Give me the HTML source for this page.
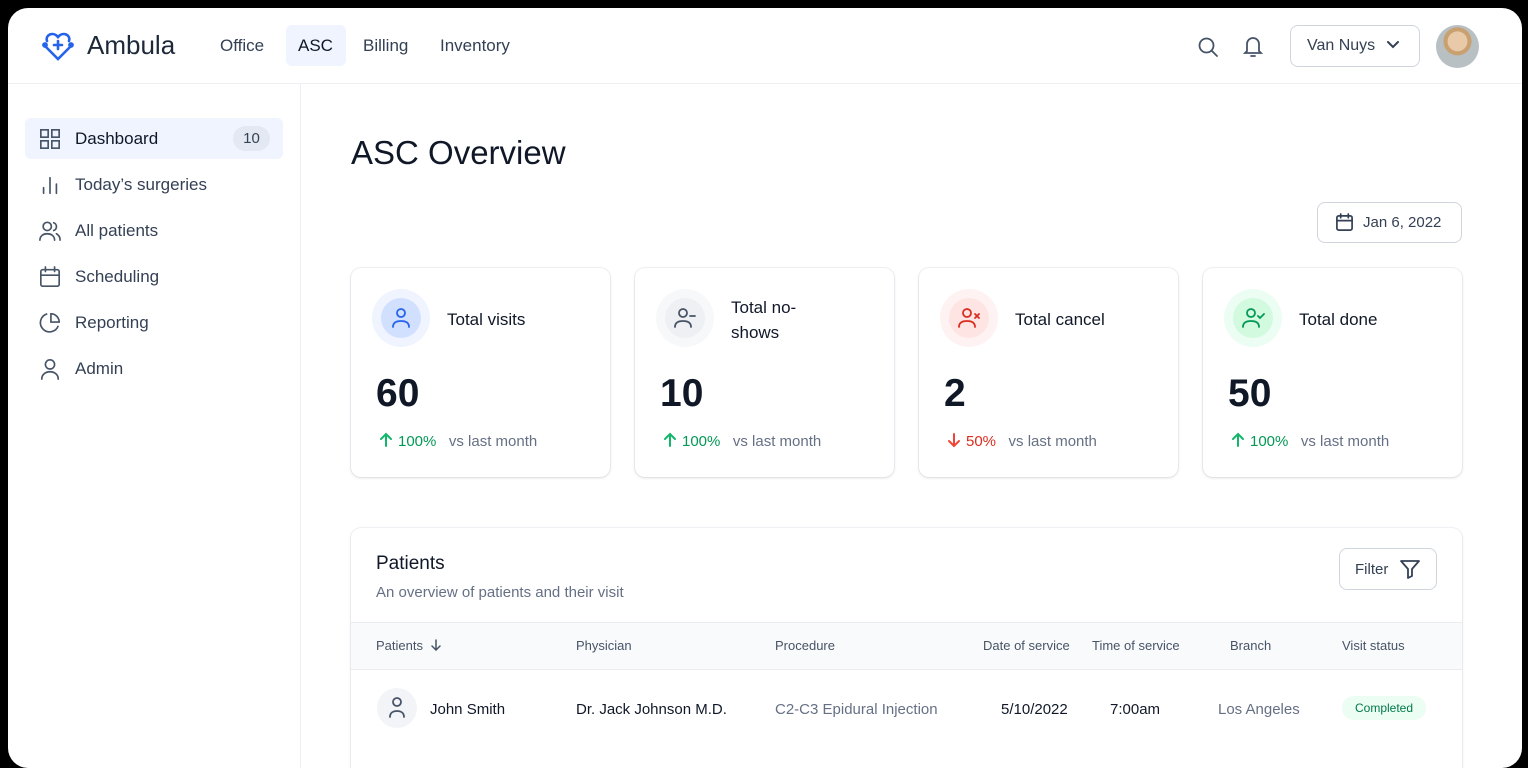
<!DOCTYPE html>
<html><head><meta charset="utf-8"><style>
*{box-sizing:border-box;margin:0;padding:0}
body{width:1528px;height:742px;background:#000;overflow:hidden;font-family:"Liberation Sans",sans-serif;color:#101828;position:relative}
.panel{position:absolute;left:8px;top:8px;width:1514px;height:760px;background:#fff;border-radius:20px;overflow:hidden}
.a{position:absolute;white-space:nowrap}
.hline{position:absolute;left:0;top:75px;width:1514px;height:1px;background:#eef0f3}
.vline{position:absolute;left:292px;top:76px;width:1px;height:700px;background:#eef0f3}
.nav{font-size:17px;color:#344054;top:28px}
.side{font-size:17px;color:#344054;left:67px}
.card{position:absolute;top:260px;width:259px;height:209px;background:#fff;border-radius:10px;box-shadow:0 1px 3px rgba(16,24,40,.12),0 0 0 1px #f2f4f7}
.ic{position:absolute;left:21px;top:21px;width:58px;height:58px;border-radius:50%}
.ic div{position:absolute;left:9px;top:9px;width:40px;height:40px;border-radius:50%}
.ic svg{position:absolute;left:17px;top:17px}
.ct{position:absolute;left:96px;top:39px;font-size:17px;color:#101828;line-height:25px}
.num{position:absolute;left:25px;top:104px;font-size:39px;font-weight:bold;color:#101828}
.ch{position:absolute;left:27px;top:164px;font-size:15px;color:#667085}
.ch svg{vertical-align:-2px;margin-right:4px}
.th{position:absolute;top:630px;font-size:13px;color:#475467}
.td{position:absolute;top:693px;font-size:15px}
</style></head><body>
<div class="panel">
 <svg class="a" style="left:33px;top:22px" width="34" height="32" viewBox="0 0 34 32" fill="none" stroke="#2563eb" stroke-width="2.6" stroke-linecap="round"><path d="M6 11C4 5 12 1 17 7C22 1 30 5 28 11"/><path d="M5 17L17 29L29 17"/><path d="M17 11v8M13 15h8"/><circle cx="4" cy="15" r="1.6" fill="#2563eb"/><circle cx="30" cy="15" r="1.6" fill="#2563eb"/></svg>
 <div class="a" style="left:79px;top:22px;font-size:26px;color:#1d2939">Ambula</div>
 <div class="a" style="left:278px;top:17px;width:60px;height:41px;background:#eff4ff;border-radius:6px"></div>
 <div class="a nav" style="left:212px">Office</div>
 <div class="a nav" style="left:290px;color:#101828">ASC</div>
 <div class="a nav" style="left:355px">Billing</div>
 <div class="a nav" style="left:432px">Inventory</div>
 <svg class="a" style="left:1189px;top:28px" width="22" height="22" viewBox="0 0 22 22" fill="none" stroke="#475467" stroke-width="1.8" stroke-linecap="round"><circle cx="9.5" cy="9.5" r="7"/><path d="M15 15l5 5"/></svg>
 <svg class="a" style="left:1235px;top:27px" width="20" height="24" viewBox="0 0 20 24" fill="none" stroke="#475467" stroke-width="1.8" stroke-linecap="round"><path d="M4 16V9a6 6 0 0112 0v7l2 2H2z"/><path d="M8 21h4"/></svg>
 <div class="a" style="left:1282px;top:17px;width:130px;height:42px;border:1px solid #d0d5dd;border-radius:8px"></div>
 <div class="a" style="left:1299px;top:29px;font-size:16px;color:#344054">Van Nuys</div>
 <svg class="a" style="left:1378px;top:32px" width="14" height="10" viewBox="0 0 14 10" fill="none" stroke="#344054" stroke-width="2" stroke-linecap="round"><path d="M2 2l5 5 5-5"/></svg>
 <div class="a" style="left:1428px;top:17px;width:43px;height:43px;border-radius:50%;background:radial-gradient(circle at 50% 38%,#e8c9a8 0 28%,#c9a070 30% 40%,#b9c0c3 42%)"></div>
 <div class="hline"></div><div class="vline"></div>

 <div class="a" style="left:17px;top:110px;width:258px;height:41px;background:#eff4ff;border-radius:6px"></div>
 <div class="a" style="left:225px;top:118px;width:37px;height:25px;background:#e3e8f2;border-radius:13px;font-size:15px;color:#344054;text-align:center;line-height:25px">10</div>
 <svg class="a" style="left:31px;top:120px" width="22" height="22" viewBox="0 0 24 24" fill="none" stroke="#475467" stroke-width="1.8"><rect x="2" y="2" width="8" height="8"/><rect x="14" y="2" width="8" height="8"/><rect x="2" y="14" width="8" height="8"/><rect x="14" y="14" width="8" height="8"/></svg>
 <svg class="a" style="left:31px;top:166px" width="22" height="22" viewBox="0 0 24 24" fill="none" stroke="#475467" stroke-width="1.8" stroke-linecap="round"><path d="M5 21v-6M12 21V4M19 21v-10"/></svg>
 <svg class="a" style="left:30px;top:212px" width="24" height="22" viewBox="0 0 26 24" fill="none" stroke="#475467" stroke-width="1.8" stroke-linecap="round"><circle cx="10" cy="7" r="4.5"/><path d="M2 22c0-5 4-7 8-7s8 2 8 7M17 3a4.5 4.5 0 010 8.5M20 15c2 1 4 3 4 7"/></svg>
 <svg class="a" style="left:31px;top:258px" width="22" height="22" viewBox="0 0 24 24" fill="none" stroke="#475467" stroke-width="1.8" stroke-linecap="round"><rect x="2" y="4" width="20" height="18" rx="2"/><path d="M2 10h20M7 1v5M17 1v5"/></svg>
 <svg class="a" style="left:31px;top:304px" width="22" height="22" viewBox="0 0 24 24" fill="none" stroke="#475467" stroke-width="1.8"><path d="M21 15A10 10 0 119 2"/><path d="M13 2a9 9 0 019 9h-9z"/></svg>
 <svg class="a" style="left:31px;top:350px" width="22" height="22" viewBox="0 0 24 24" fill="none" stroke="#475467" stroke-width="1.8" stroke-linecap="round"><circle cx="12" cy="7" r="5"/><path d="M3 23c0-5 4-8 9-8s9 3 9 8"/></svg>
 <div class="a side" style="top:121px;color:#101828">Dashboard</div>
 <div class="a side" style="top:167px">Today’s surgeries</div>
 <div class="a side" style="top:213px">All patients</div>
 <div class="a side" style="top:259px">Scheduling</div>
 <div class="a side" style="top:305px">Reporting</div>
 <div class="a side" style="top:351px">Admin</div>

 <div class="a" style="left:343px;top:126px;font-size:33px;color:#101828">ASC Overview</div>
 <div class="a" style="left:1309px;top:194px;width:145px;height:41px;border:1px solid #d0d5dd;border-radius:8px"></div>
 <svg class="a" style="left:1327px;top:205px" width="19" height="19" viewBox="0 0 20 20" fill="none" stroke="#344054" stroke-width="1.8" stroke-linecap="round"><rect x="2" y="3" width="16" height="15" rx="2"/><path d="M2 8h16M6 1v4M14 1v4"/></svg>
 <div class="a" style="left:1355px;top:206px;font-size:15px;color:#344054">Jan 6, 2022</div>

 <div class="card" style="left:343px"><div class="ic" style="background:#eff4ff"><div style="background:#d1e0ff"></div><svg width="24" height="24" viewBox="0 0 24 24" fill="none" stroke="#2563eb" stroke-width="1.8" stroke-linecap="round"><circle cx="12" cy="7" r="4"/><path d="M4 21c0-4 3-6 8-6s8 2 8 6"/></svg></div><div class="ct">Total visits</div><div class="num">60</div><div class="ch"><svg width="16" height="16" viewBox="0 0 16 16" fill="none" stroke="#12b76a" stroke-width="2" stroke-linecap="round"><path d="M8 14V2M3 7l5-5 5 5"/></svg><span style="color:#039855">100%</span>&nbsp;&nbsp; vs last month</div></div>
 <div class="card" style="left:627px"><div class="ic" style="background:#f7f8fa"><div style="background:#eef0f4"></div><svg width="24" height="24" viewBox="0 0 24 24" fill="none" stroke="#475467" stroke-width="1.8" stroke-linecap="round"><circle cx="10" cy="7" r="4"/><path d="M2 21c0-4 3-6 8-6s8 2 8 6M17 10h5"/></svg></div><div class="ct" style="top:27px">Total no-<br>shows</div><div class="num">10</div><div class="ch"><svg width="16" height="16" viewBox="0 0 16 16" fill="none" stroke="#12b76a" stroke-width="2" stroke-linecap="round"><path d="M8 14V2M3 7l5-5 5 5"/></svg><span style="color:#039855">100%</span>&nbsp;&nbsp; vs last month</div></div>
 <div class="card" style="left:911px"><div class="ic" style="background:#fef3f2"><div style="background:#fee4e2"></div><svg width="24" height="24" viewBox="0 0 24 24" fill="none" stroke="#d92d20" stroke-width="1.8" stroke-linecap="round"><circle cx="10" cy="7" r="4"/><path d="M2 21c0-4 3-6 8-6s8 2 8 6M18 8l4 4M22 8l-4 4"/></svg></div><div class="ct">Total cancel</div><div class="num">2</div><div class="ch"><svg width="16" height="16" viewBox="0 0 16 16" fill="none" stroke="#f04438" stroke-width="2" stroke-linecap="round"><path d="M8 2v12M3 9l5 5 5-5"/></svg><span style="color:#d92d20">50%</span>&nbsp;&nbsp; vs last month</div></div>
 <div class="card" style="left:1195px"><div class="ic" style="background:#ecfdf3"><div style="background:#d1fadf"></div><svg width="24" height="24" viewBox="0 0 24 24" fill="none" stroke="#039855" stroke-width="1.8" stroke-linecap="round"><circle cx="10" cy="7" r="4"/><path d="M2 21c0-4 3-6 8-6s8 2 8 6M17 10l2 2 4-4"/></svg></div><div class="ct">Total done</div><div class="num">50</div><div class="ch"><svg width="16" height="16" viewBox="0 0 16 16" fill="none" stroke="#12b76a" stroke-width="2" stroke-linecap="round"><path d="M8 14V2M3 7l5-5 5 5"/></svg><span style="color:#039855">100%</span>&nbsp;&nbsp; vs last month</div></div>

 <div class="a" style="left:343px;top:520px;width:1111px;height:260px;border-radius:10px;box-shadow:0 1px 3px rgba(16,24,40,.1),0 0 0 1px #f2f4f7;overflow:hidden">
  <div class="a" style="left:0;top:94px;width:1111px;height:48px;background:#f9fafb;border-top:1px solid #eaecf0;border-bottom:1px solid #eaecf0"></div>
 </div>
 <div class="a" style="left:368px;top:545px;font-size:19px;color:#101828">Patients</div>
 <div class="a" style="left:368px;top:576px;font-size:15px;color:#667085">An overview of patients and their visit</div>
 <div class="a" style="left:1331px;top:540px;width:98px;height:42px;border:1px solid #d0d5dd;border-radius:8px"></div>
 <div class="a" style="left:1347px;top:553px;font-size:15px;color:#344054">Filter</div>
 <svg class="a" style="left:1391px;top:550px" width="22" height="22" viewBox="0 0 22 22" fill="none" stroke="#344054" stroke-width="1.8" stroke-linejoin="round"><path d="M2 3h18l-7 8v7l-4 2v-9z"/></svg>
 <div class="th" style="left:368px">Patients <svg width="12" height="12" viewBox="0 0 12 12" fill="none" stroke="#475467" stroke-width="1.5" stroke-linecap="round" style="vertical-align:-1px;margin-left:3px"><path d="M6 1v10M2 7l4 4 4-4"/></svg></div>
 <div class="th" style="left:568px">Physician</div>
 <div class="th" style="left:767px">Procedure</div>
 <div class="th" style="left:975px">Date of service</div>
 <div class="th" style="left:1084px">Time of service</div>
 <div class="th" style="left:1222px">Branch</div>
 <div class="th" style="left:1334px">Visit status</div>
 <div class="a" style="left:369px;top:680px;width:40px;height:40px;border-radius:50%;background:#f2f4f7"></div>
 <svg class="a" style="left:379px;top:688px" width="20" height="22" viewBox="0 0 20 22" fill="none" stroke="#475467" stroke-width="1.8" stroke-linecap="round"><circle cx="10" cy="6" r="4"/><path d="M3 21c0-4 3-6 7-6s7 2 7 6"/></svg>
 <div class="td" style="left:422px;color:#101828">John Smith</div>
 <div class="td" style="left:568px;color:#101828">Dr. Jack Johnson M.D.</div>
 <div class="td" style="left:767px;color:#667085">C2-C3 Epidural Injection</div>
 <div class="td" style="left:993px;color:#101828">5/10/2022</div>
 <div class="td" style="left:1102px;color:#101828">7:00am</div>
 <div class="td" style="left:1210px;color:#667085">Los Angeles</div>
 <div class="a" style="left:1334px;top:688px;width:84px;height:24px;border-radius:12px;background:#ecfdf3;color:#027a48;font-size:12px;text-align:center;line-height:24px">Completed</div>
</div>
</body></html>
